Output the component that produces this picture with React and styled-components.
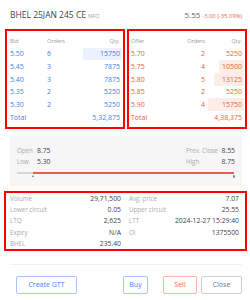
import React from "react";
import styled, { createGlobalStyle } from "styled-components";

const Global = createGlobalStyle`
  html, body { margin: 0; padding: 0; background: #fff; }
  body { font-family: "Open Sans", "DejaVu Sans", sans-serif; color: #444; }
  * { box-sizing: border-box; }
`;

const BLUE = "#4184f3";
const RED = "#f0603e";
const NEG = "#e25f5b";
const ANNOT = "#ff0000";

const Page = styled.div`
  width: 250px;
  height: 300px;
  display: flex;
  flex-direction: column;
`;

const Header = styled.div`
  height: 28px;
  display: flex;
  align-items: center;
  justify-content: space-between;
  padding: 0 8px 0 10px;
`;

const Title = styled.div`
  font-size: 8.5px;
  color: #444;
  display: flex;
  align-items: baseline;
  gap: 2px;
`;

const Exchange = styled.span`
  font-size: 5.5px;
  color: #999;
`;

const Quote = styled.div`
  display: flex;
  align-items: baseline;
  gap: 2px;
`;

const Ltp = styled.span`
  font-size: 8px;
  color: #666;
`;

const Change = styled.span`
  font-size: 5.8px;
  color: ${NEG};
`;

const Depth = styled.div`
  margin-top: 1px;
  padding-left: 5px;
  display: grid;
  grid-template-columns: 120px 120px;
  gap: 2px;
`;

const DepthBox = styled.div`
  border: 2px solid ${ANNOT};
  height: 100px;
  padding: ${(p) => (p.$side === "bid" ? "4px 1px 0 3px" : "4px 1px 0 2px")};
`;

const DepthRow = styled.div`
  display: grid;
  grid-template-columns: ${(p) => (p.$side === "bid" ? "37px 1fr 39px" : "1fr 40px 36px")};
  column-gap: ${(p) => (p.$side === "bid" ? "0" : "3px")};
  height: ${(p) => (p.$head ? "12.5px" : "12.7px")};
  align-items: center;
  font-size: ${(p) => (p.$head ? "5.5px" : "7px")};
  color: ${(p) => (p.$head ? "#999" : p.$side === "bid" ? BLUE : RED)};
`;

const Cell = styled.div`
  text-align: ${(p) => p.$align || "left"};
  white-space: nowrap;
`;

const QtyCell = styled.div`
  position: relative;
  height: 100%;
  display: flex;
  align-items: center;
  justify-content: flex-end;
  padding-right: 2px;
  white-space: nowrap;
`;

const Bar = styled.div`
  position: absolute;
  right: 0;
  top: 0;
  bottom: 0;
  background: ${(p) => (p.$side === "bid" ? "#ebf2fe" : "#fdede8")};
`;

const QtyText = styled.span`
  position: relative;
`;

const Divider = styled.div`
  height: 1px;
  background: #f0f0f0;
  margin: ${(p) => p.$m};
`;

const Ohlc = styled.div`
  margin: 4px 8px 0 10px;
  height: 50px;
  background: #f6f6f6;
  padding: 9px 7px 0 7px;
  display: flex;
  flex-direction: column;
`;

const OhlcRow = styled.div`
  height: 11px;
  display: flex;
  align-items: center;
  justify-content: space-between;
`;

const Pair = styled.div`
  display: grid;
  grid-template-columns: ${(p) => p.$label}px auto;
  align-items: center;
  width: ${(p) => p.$w}px;
`;

const Label = styled.span`
  font-size: 6.2px;
  color: #aaa;
  white-space: nowrap;
`;

const Value = styled.span`
  font-size: 6.8px;
  color: #444;
  white-space: nowrap;
  text-align: ${(p) => p.$align || "left"};
`;

const Slider = styled.div`
  position: relative;
  margin-top: 4px;
  height: 8px;
  padding-right: 1px;
`;

const Track = styled.div`
  position: absolute;
  left: 0;
  right: 1px;
  top: 1px;
  height: 1.5px;
  background: #d8d8d8;
`;

const Range = styled.div`
  position: absolute;
  top: 1px;
  height: 1.5px;
  background: #ea5d57;
`;

const Tri = styled.div`
  position: absolute;
  top: 4px;
  width: 0;
  height: 0;
  border-left: 1.5px solid transparent;
  border-right: 1.5px solid transparent;
  border-bottom: 2.5px solid #777;
`;

const Dot = styled.div`
  position: absolute;
  top: 4px;
  width: 2.5px;
  height: 2.5px;
  border-radius: 50%;
  background: #888;
`;

const Stats = styled.div`
  margin: 5px 3px 0 4px;
  border: 2px solid ${ANNOT};
  padding: 0 6px 0 4px;
  display: grid;
  grid-template-columns: 111px 110px;
  column-gap: 8px;
  grid-auto-rows: 11.2px;
`;

const StatCell = styled.div`
  display: flex;
  align-items: center;
  justify-content: space-between;
`;

const Actions = styled.div`
  margin-top: 11px;
  padding: 0 8px 0 16px;
  display: flex;
  justify-content: space-between;
  align-items: center;
`;

const Group = styled.div`
  display: flex;
  align-items: center;
`;

const Button = styled.button`
  height: 18px;
  width: ${(p) => p.$w}px;
  margin-left: ${(p) => p.$ml || 0}px;
  padding: 0;
  background: #fff;
  border: 1px solid ${(p) => p.$border};
  border-radius: 2px;
  color: ${(p) => p.$color};
  font-family: "Open Sans", sans-serif;
  font-size: 7px;
  cursor: pointer;
`;

const bids = [
  { p: "5.50", o: "6", q: "15750", bar: 100 },
  { p: "5.45", o: "3", q: "7875", bar: 0 },
  { p: "5.40", o: "3", q: "7875", bar: 0 },
  { p: "5.35", o: "2", q: "5250", bar: 0 },
  { p: "5.30", o: "2", q: "5250", bar: 0 },
];

const offers = [
  { p: "5.70", o: "2", q: "5250", bar: 0 },
  { p: "5.75", o: "4", q: "10500", bar: 70 },
  { p: "5.80", o: "5", q: "13125", bar: 82 },
  { p: "5.85", o: "2", q: "5250", bar: 0 },
  { p: "5.90", o: "4", q: "15750", bar: 100 },
];

const stats = [
  ["Volume", "29,71,500"],
  ["Avg. price", "7.07"],
  ["Lower circuit", "0.05"],
  ["Upper circuit", "25.55"],
  ["LTQ", "2,625"],
  ["LTT", "2024-12-27 15:29:40"],
  ["Expiry", "N/A"],
  ["OI", "1375500"],
  ["BHEL", "235.40"],
];

function Book({ side, rows, total }) {
  const isBid = side === "bid";
  return (
    <DepthBox $side={side}>
      <DepthRow $side={side} $head>
        <Cell>{isBid ? "Bid" : "Offer"}</Cell>
        <Cell $align={isBid ? "left" : "right"}>Orders</Cell>
        <Cell $align="right" style={{ paddingRight: 2 }}>Qty.</Cell>
      </DepthRow>
      {rows.map((r) => (
        <DepthRow $side={side} key={r.p}>
          <Cell>{r.p}</Cell>
          <Cell $align={isBid ? "left" : "right"}>{r.o}</Cell>
          <QtyCell>
            {r.bar > 0 && <Bar $side={side} style={{ width: `${r.bar}%` }} />}
            <QtyText>{r.q}</QtyText>
          </QtyCell>
        </DepthRow>
      ))}
      <DepthRow $side={side}>
        <Cell>Total</Cell>
        <Cell />
        <Cell $align="right" style={{ paddingRight: 2, overflow: "visible", direction: "rtl" }}>
          {total}
        </Cell>
      </DepthRow>
    </DepthBox>
  );
}

export default function App() {
  return (
    <Page>
      <Global />
      <Header>
        <Title>
          BHEL 25JAN 245 CE <Exchange>NFO</Exchange>
        </Title>
        <Quote>
          <Ltp>5.55</Ltp>
          <Change>-3.00 (-35.09%)</Change>
        </Quote>
      </Header>

      <Depth>
        <Book side="bid" rows={bids} total="5,32,875" />
        <Book side="offer" rows={offers} total="4,38,375" />
      </Depth>

      <Divider $m="2px 8px 0 10px" />

      <Ohlc>
        <OhlcRow>
          <Pair $label={20} $w={40}>
            <Label>Open</Label>
            <Value>8.75</Value>
          </Pair>
          <Pair $label={35} $w={49}>
            <Label>Prev. Close</Label>
            <Value $align="right">8.55</Value>
          </Pair>
        </OhlcRow>
        <OhlcRow>
          <Pair $label={20} $w={40}>
            <Label>Low</Label>
            <Value>5.30</Value>
          </Pair>
          <Pair $label={35} $w={49}>
            <Label>High</Label>
            <Value $align="right">8.75</Value>
          </Pair>
        </OhlcRow>
        <Slider>
          <Track />
          <Range style={{ left: 16, right: 1 }} />
          <Tri style={{ left: 14.5 }} />
          <Dot style={{ right: 0 }} />
        </Slider>
      </Ohlc>

      <Stats>
        {stats.map(([l, v]) => (
          <StatCell key={l}>
            <Label>{l}</Label>
            <Value $align="right">{v}</Value>
          </StatCell>
        ))}
      </Stats>

      <Divider $m="13px 8px 0 10px" />

      <Actions>
        <Button $w={61} $border="#a9c6f8" $color={BLUE}>Create GTT</Button>
        <Group>
          <Button $w={25} $border="#a9c6f8" $color={BLUE}>Buy</Button>
          <Button $w={34} $ml={15} $border="#f9b7a6" $color={RED}>Sell</Button>
          <Button $w={41} $ml={4} $border="#cfcfcf" $color="#777">Close</Button>
        </Group>
      </Actions>
    </Page>
  );
}
